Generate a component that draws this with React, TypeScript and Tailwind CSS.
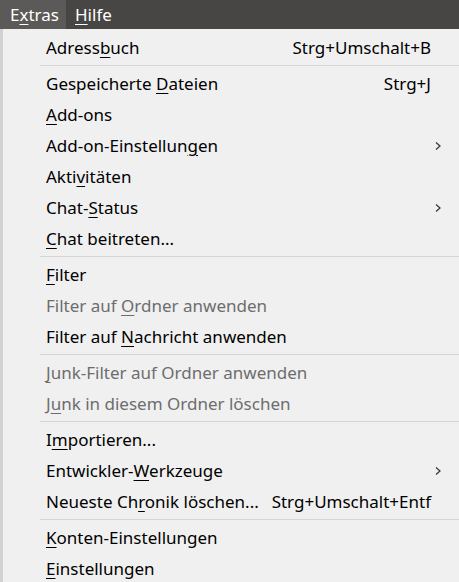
import type { ReactNode } from 'react'

type Item = {
  label: ReactNode
  shortcut?: string
  sub?: boolean
  disabled?: boolean
}

// underline access key letter
function k(before: string, key: string, after: string) {
  return (
    <>
      {before}
      <span className="underline decoration-1 underline-offset-[3px]">{key}</span>
      {after}
    </>
  )
}

const groups: Item[][] = [
  [{ label: k('Adress', 'b', 'uch'), shortcut: 'Strg+Umschalt+B' }],
  [
    { label: k('Gespeicherte ', 'D', 'ateien'), shortcut: 'Strg+J' },
    { label: k('', 'A', 'dd-ons') },
    { label: k('Add-on-Einstellun', 'g', 'en'), sub: true },
    { label: k('Akti', 'v', 'itäten') },
    { label: k('Chat-', 'S', 'tatus'), sub: true },
    { label: k('', 'C', 'hat beitreten...') },
  ],
  [
    { label: k('', 'F', 'ilter') },
    { label: k('Filter auf ', 'O', 'rdner anwenden'), disabled: true },
    { label: k('Filter auf ', 'N', 'achricht anwenden') },
  ],
  [
    { label: k('', 'J', 'unk-Filter auf Ordner anwenden'), disabled: true },
    { label: k('J', 'u', 'nk in diesem Ordner löschen'), disabled: true },
  ],
  [
    { label: k('I', 'm', 'portieren...') },
    { label: k('Entwickler-', 'W', 'erkzeuge'), sub: true },
    { label: k('Neueste Ch', 'r', 'onik löschen...'), shortcut: 'Strg+Umschalt+Entf' },
  ],
  [
    { label: k('', 'K', 'onten-Einstellungen') },
    { label: k('', 'E', 'instellungen') },
  ],
]

function Chevron() {
  return (
    <svg width="8" height="12" viewBox="0 0 8 12" className="text-[#333]">
      <path d="M2 2.5 L6 6 L2 9.5" fill="none" stroke="currentColor" strokeWidth="1.2" />
    </svg>
  )
}

function Row({ item }: { item: Item }) {
  return (
    <div
      className={
        'flex h-[31px] items-center pl-[43px] pr-[28px] ' +
        (item.disabled ? 'text-[#6d6d6d]' : 'text-black')
      }
    >
      <span className="flex-1 whitespace-nowrap">{item.label}</span>
      {item.shortcut && <span className="whitespace-nowrap">{item.shortcut}</span>}
      {item.sub && (
        <span className="mr-[-13px] flex w-[12px] justify-center">
          <Chevron />
        </span>
      )}
    </div>
  )
}

export default function App() {
  return (
    <div
      className="h-[582px] w-[459px] overflow-hidden bg-[#f0f0f0] text-[17px]"
      style={{ fontFamily: '"Noto Sans", "Open Sans", sans-serif' }}
    >
      <div className="flex h-[29px] bg-[#484644] text-white">
        <div className="flex h-full w-[66px] items-center bg-[#5c5a58] pl-[10px]">
          {k('E', 'x', 'tras')}
        </div>
        <div className="flex h-full items-center pl-[9px]">{k('', 'H', 'ilfe')}</div>
      </div>
      <div className="flex">
        <div className="w-[3px] self-stretch bg-[#d2d2d2]" />
        <div className="flex-1 pt-[3px]">
          {groups.map((g, gi) => (
            <div key={gi}>
              {gi > 0 && (
                <div className="flex h-[5px] items-center pl-[37px]">
                  <div className="h-px w-full bg-[#d5d5d5]" />
                </div>
              )}
              {g.map((item, i) => (
                <Row key={i} item={item} />
              ))}
            </div>
          ))}
        </div>
      </div>
    </div>
  )
}
